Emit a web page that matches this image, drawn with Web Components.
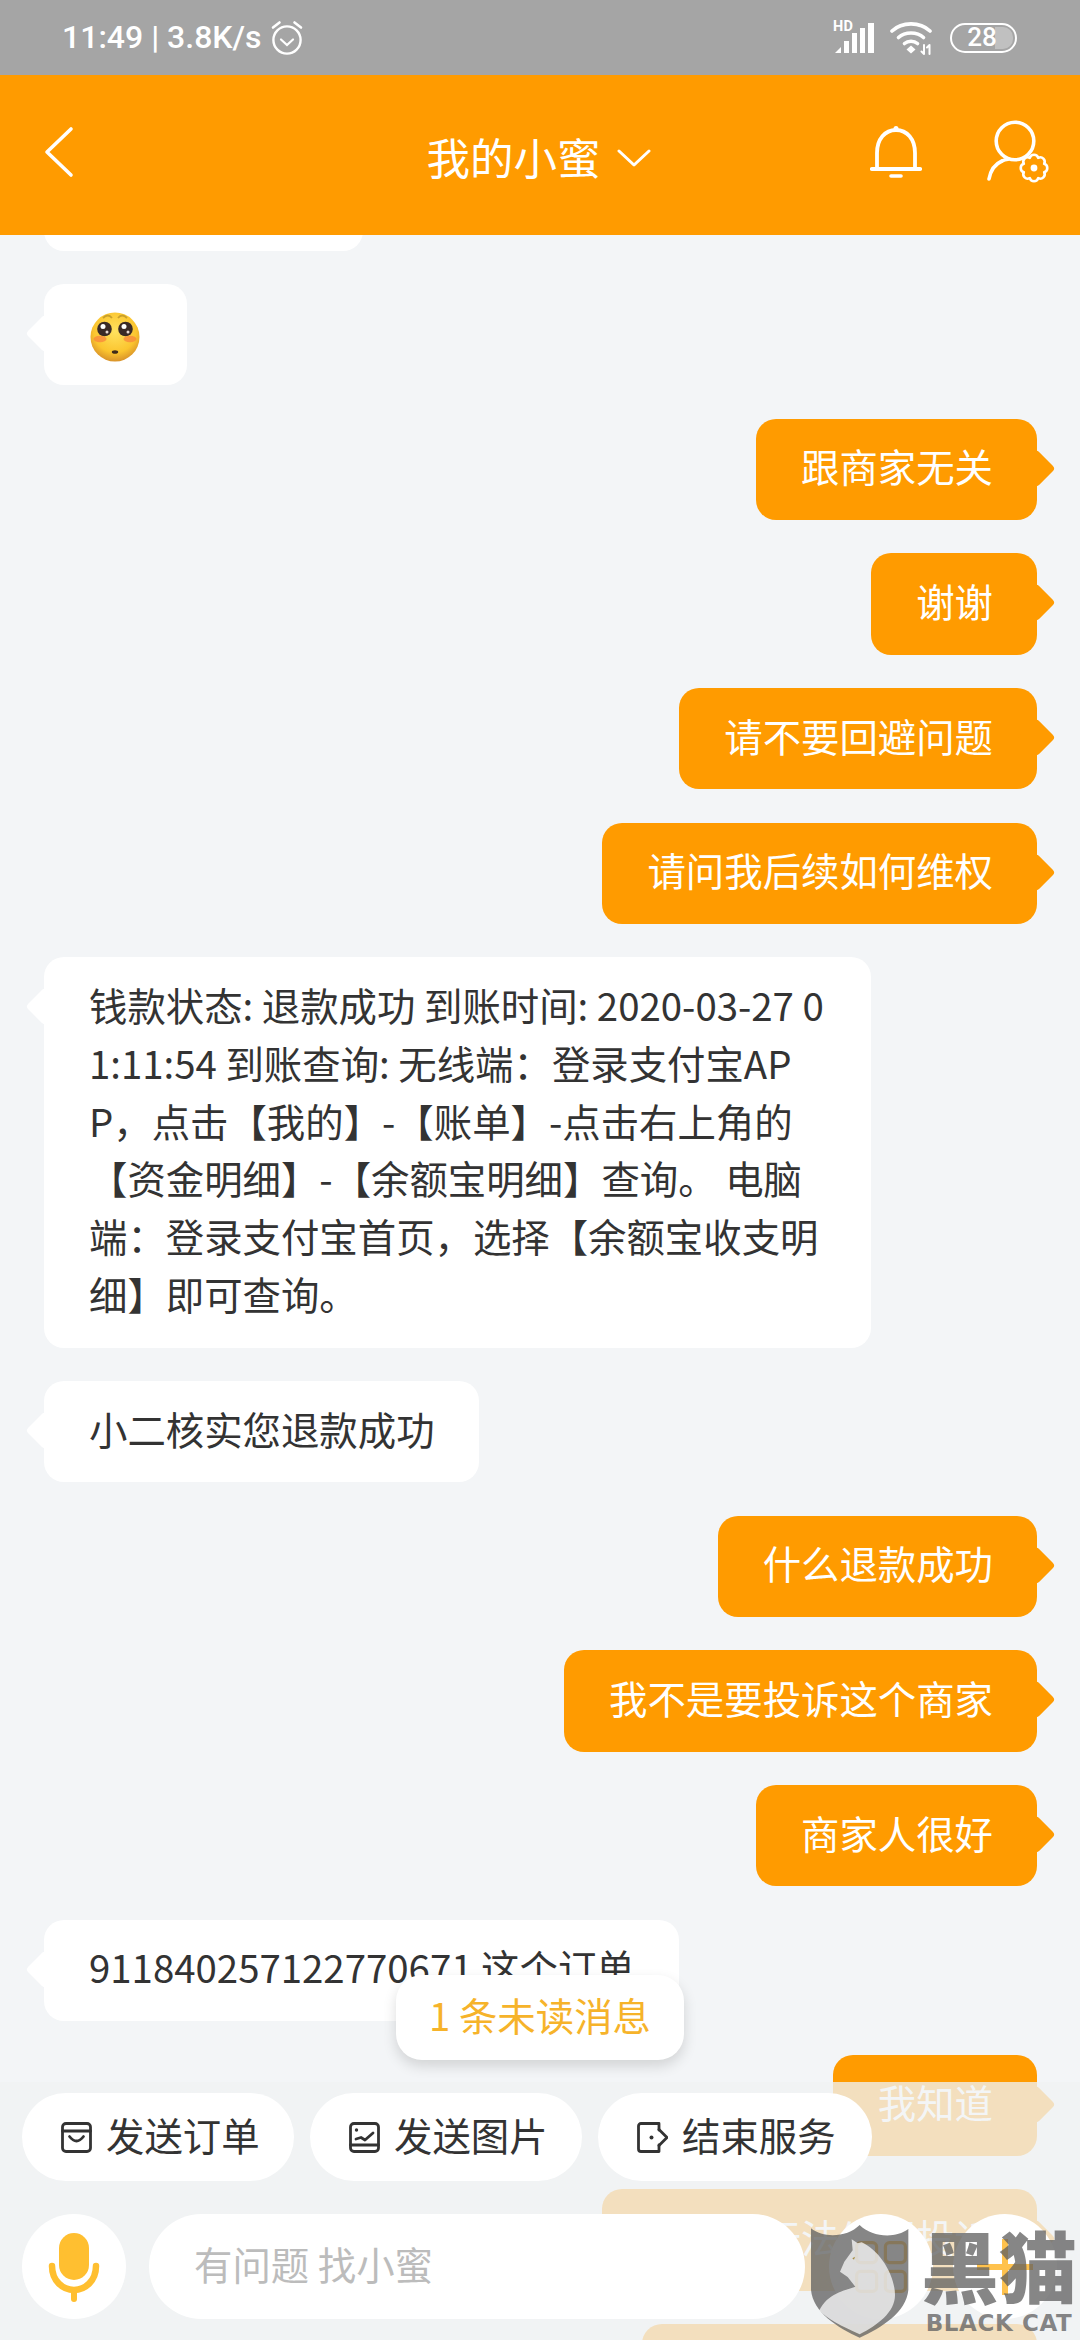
<!DOCTYPE html>
<html lang="zh">
<head>
<meta charset="utf-8">
<title>我的小蜜</title>
<style>
  html, body { margin: 0; padding: 0; background: #f3f5f7; }
  body { width: 1080px; height: 2340px; overflow: hidden; font-family: "Noto Sans CJK SC", "Noto Sans", sans-serif; }
</style>
</head>
<body>
<app-screen>
  <status-bar slot="status"></status-bar>
  <top-header slot="header"></top-header>

  <chat-bubble style="width:319px"></chat-bubble>
  <chat-bubble><blush-emoji></blush-emoji></chat-bubble>
  <chat-bubble side="me">跟商家无关</chat-bubble>
  <chat-bubble side="me">谢谢</chat-bubble>
  <chat-bubble side="me">请不要回避问题</chat-bubble>
  <chat-bubble side="me">请问我后续如何维权</chat-bubble>
  <chat-bubble>钱款状态: 退款成功 到账时间: 2020-03-27 01:11:54 到账查询: 无线端：登录支付宝APP，点击【我的】-【账单】-点击右上角的【资金明细】-【余额宝明细】查询。 电脑端：登录支付宝首页，选择【余额宝收支明细】即可查询。</chat-bubble>
  <chat-bubble>小二核实您退款成功</chat-bubble>
  <chat-bubble side="me">什么退款成功</chat-bubble>
  <chat-bubble side="me">我不是要投诉这个商家</chat-bubble>
  <chat-bubble side="me">商家人很好</chat-bubble>
  <chat-bubble>911840257122770671 这个订单</chat-bubble>
  <chat-bubble side="me">我知道</chat-bubble>
  <chat-bubble side="me">请问我无法发起投诉</chat-bubble>
  <chat-bubble side="me" style="width:395px"></chat-bubble>

  <unread-toast slot="overlay">1 条未读消息</unread-toast>
  <bottom-panel slot="overlay"></bottom-panel>
  <black-cat-mark slot="overlay"></black-cat-mark>
</app-screen>

<script>
const screenTemplate = document.createElement('template');
screenTemplate.innerHTML = `
<style>
  :host { display: flex; flex-direction: column; position: relative; width: 1080px; height: 2340px; overflow: hidden; background: #f3f5f7; }
  .top { position: relative; z-index: 2; flex: none; }
  .list { flex: 1; min-height: 0; overflow: hidden; display: flex; flex-direction: column; gap: 33.4px; padding: 0 43px 0 44px; margin-top: -85.7px; }
</style>
<div class="top"><slot name="status"></slot><slot name="header"></slot></div>
<div class="list"><slot></slot></div>
<slot name="overlay"></slot>
`;
class AppScreen extends HTMLElement {
  constructor() {
    super();
    this.attachShadow({ mode: 'open' }).appendChild(screenTemplate.content.cloneNode(true));
  }
}

const statusTemplate = document.createElement('template');
statusTemplate.innerHTML = `
<style>
  :host { display: flex; align-items: center; height: 75px; background: #a5a5a5; color: #fff; font-family: Roboto, "Noto Sans", sans-serif; box-sizing: border-box; padding: 0 63px 0 62px; }
  .time { font-size: 32px; font-weight: 500; line-height: 75px; white-space: nowrap; margin-right: 9px; }
  svg { display: block; flex: none; }
  .spacer { flex: 1; }
  .signal { position: relative; width: 42px; height: 31px; margin-right: 15px; }
  .hd { position: absolute; left: 0; top: -3px; font-size: 14.5px; font-weight: 700; line-height: 16px; letter-spacing: .3px; }
  .wifi { margin-right: 16px; }
  .battery { position: relative; box-sizing: border-box; width: 67px; height: 30px; border: 2.6px solid #fff; border-radius: 15px; display: flex; align-items: center; justify-content: center; font-size: 26px; font-weight: 500; line-height: 25px; }
  .battery span { position: relative; margin-right: 3px; }
  .level { position: absolute; right: 2px; top: 2px; bottom: 2px; width: 18px; background: rgba(255,255,255,.3); border-radius: 0 10px 10px 0; }
</style>
<div class="time">11:49 | 3.8K/s</div>
<svg width="34" height="36" viewBox="0 0 34 36" fill="none" stroke="#fff" stroke-linecap="round">
  <circle cx="17" cy="20" r="13.6" stroke-width="2.4"/>
  <path d="M11 19.5l6 5.5 6-5.5" stroke-width="2.2"/>
  <path d="M3 7.5L9.5 2.5M31 7.5L24.5 2.5" stroke-width="2.6"/>
</svg>
<div class="spacer"></div>
<div class="signal">
  <span class="hd">HD</span>
  <svg width="42" height="31" viewBox="0 0 42 31" fill="#fff" style="position:absolute;left:0;top:0">
    <path d="M2 31L8 25V31Z"/>
    <rect x="11" y="19" width="5" height="12"/>
    <rect x="19" y="11" width="5" height="20"/>
    <rect x="27" y="6" width="5" height="25"/>
    <rect x="35" y="1" width="6" height="30"/>
  </svg>
</div>
<svg class="wifi" width="44" height="34" viewBox="0 0 44 34" fill="none" stroke="#fff" stroke-width="3.6" stroke-linecap="round">
  <path d="M2 10C12 .5 30 .5 40 10"/>
  <path d="M8.5 16.5C15 10.5 27 10.5 33.5 16.5"/>
  <path d="M14.5 22.5C18 19.5 24 19.5 27.5 22.5"/>
  <path d="M21 24.5l4.5 4-4.5 4-4.5-4z" fill="#fff" stroke="none"/>
  <path d="M34 24v9M31.5 30.5l2.5 2.5M39.5 33v-9M37 26.500l2.500-2.500" stroke-width="2"/>
</svg>
<div class="battery"><div class="level"></div><span>28</span></div>
`;
class StatusBar extends HTMLElement {
  constructor() {
    super();
    this.attachShadow({ mode: 'open' }).appendChild(statusTemplate.content.cloneNode(true));
  }
}

const headerTemplate = document.createElement('template');
headerTemplate.innerHTML = `
<style>
  :host { display: grid; grid-template-columns: 1fr auto 1fr; align-items: center; height: 160px; background: #ff9b00; color: #fff; box-sizing: border-box; padding: 0 31px; }
  svg { display: block; }
  .back { margin: -6px 0 0 13px; }
  .title { display: flex; align-items: center; gap: 16px; font-size: 43.5px; line-height: 60px; margin: 4px 0 0 -3px; }
  .title svg { margin-top: 2px; }
  .actions { display: flex; justify-content: flex-end; align-items: center; gap: 65px; }
  .bell { margin-top: -8px; }
  .user { margin-top: -7px; }
</style>
<svg class="back" width="30" height="52" viewBox="0 0 30 52" fill="none" stroke="#fff" stroke-width="3.6" stroke-linecap="round" stroke-linejoin="round">
  <path d="M27 3L3 26l24 23"/>
</svg>
<div class="title">
  <span>我的小蜜</span>
  <svg width="34" height="18" viewBox="0 0 34 18" fill="none" stroke="#fff" stroke-width="3" stroke-linecap="round" stroke-linejoin="round"><path d="M2 2l15 14L32 2"/></svg>
</div>
<div class="actions">
  <svg class="bell" width="52" height="53" viewBox="0 0 52 53" fill="none" stroke="#fff" stroke-width="3.800" stroke-linecap="round">
    <path d="M7 43V28C7 14 15 5 26 5s19 9 19 23v15"/>
    <path d="M2 44h48" stroke-width="4.200"/>
    <path d="M21 51h10" stroke-width="3.600"/>
    <circle cx="26" cy="3.500" r="2.500" fill="#fff" stroke="none"/>
  </svg>
  <svg class="user" width="62" height="64" viewBox="0 0 62 64" fill="none" stroke="#fff" stroke-linecap="round">
    <circle cx="28" cy="21" r="18.800" stroke-width="3.600"/>
    <path d="M15 41C8 44 3.500 51 2 59" stroke-width="3.600"/>
    <path d="M15 41C17 40 19 39.500 21 39.300" stroke-width="3.600"/>
    <g transform="translate(47 48)">
      <path d="M10.160 4.210A4.400 4.400 0 0 1 4.210 10.160A4.400 4.400 0 0 1 -4.210 10.160A4.400 4.400 0 0 1 -10.160 4.210A4.400 4.400 0 0 1 -10.160 -4.210A4.400 4.400 0 0 1 -4.210 -10.160A4.400 4.400 0 0 1 4.210 -10.160A4.400 4.400 0 0 1 10.160 -4.210A4.400 4.400 0 0 1 10.160 4.210Z" stroke-width="2.600" stroke-linejoin="round"/>
      <circle r="3.400" fill="#fff" stroke="none"/>
    </g>
  </svg>
</div>
`;
class TopHeader extends HTMLElement {
  constructor() {
    super();
    this.attachShadow({ mode: 'open' }).appendChild(headerTemplate.content.cloneNode(true));
  }
}

const bubbleTemplate = document.createElement('template');
bubbleTemplate.innerHTML = `
<style>
  :host { display: block; flex: none; align-self: flex-start; box-sizing: border-box; max-width: 827px; font-size: 38.4px; line-height: 57.8px; color: #333; font-family: "Noto Sans CJK SC", sans-serif; }
  :host([side="me"]) { align-self: flex-end; color: #fff; }
  .box { position: relative; box-sizing: border-box; min-height: 101.3px; padding: 18.5px 44px 25px 45px; background: #fff; border-radius: 20px; word-break: break-all; }
  :host([side="me"]) .box { background: #ff9b00; }
  .tail { position: absolute; top: 36px; left: -13px; width: 27px; height: 27px; background: inherit; transform: rotate(45deg); border-radius: 4px; }
  :host([side="me"]) .tail { left: auto; right: -13px; }
</style>
<div class="box"><div class="tail"></div><slot></slot></div>
`;
class ChatBubble extends HTMLElement {
  constructor() {
    super();
    this.attachShadow({ mode: 'open' }).appendChild(bubbleTemplate.content.cloneNode(true));
  }
}

const emojiTemplate = document.createElement('template');
emojiTemplate.innerHTML = `
<style>
  :host { display: block; width: 54px; height: 57.8px; }
  svg { display: block; overflow: visible; }
</style>
<svg width="54" height="58" viewBox="0 0 54 58">
  <defs>
    <radialGradient id="face" cx=".5" cy=".38" r=".62">
      <stop offset="0" stop-color="#ffe25f"/><stop offset=".7" stop-color="#fbc52f"/><stop offset="1" stop-color="#d9932a"/>
    </radialGradient>
  </defs>
  <g transform="translate(0 3)">
    <circle cx="26" cy="31" r="24.500" fill="url(#face)"/>
    <path d="M14 12q5-5 9 0M38 12q-5-5-9 0" fill="none" stroke="#c9a02c" stroke-width="1.800"/>
    <circle cx="15.500" cy="23" r="7.300" fill="#3a2a26"/><circle cx="36.500" cy="23" r="7.300" fill="#3a2a26"/>
    <circle cx="14" cy="20.500" r="2.500" fill="#fff"/><circle cx="35" cy="20.500" r="2.500" fill="#fff"/>
    <circle cx="18" cy="26" r="1.500" fill="#e8d8d0"/><circle cx="39" cy="26" r="1.500" fill="#e8d8d0"/>
    <ellipse cx="11" cy="33" rx="6.500" ry="3.200" fill="#f98a3c" opacity=".8"/>
    <ellipse cx="41" cy="33" rx="6.500" ry="3.200" fill="#f98a3c" opacity=".8"/>
    <ellipse cx="26" cy="46" rx="3.200" ry="1.800" fill="#3f2b1a"/>
  </g>
</svg>
`;
class BlushEmoji extends HTMLElement {
  constructor() {
    super();
    this.attachShadow({ mode: 'open' }).appendChild(emojiTemplate.content.cloneNode(true));
  }
}

const toastTemplate = document.createElement('template');
toastTemplate.innerHTML = `
<style>
  :host { position: absolute; left: 396px; top: 1975px; z-index: 3; box-sizing: border-box; width: 288px; height: 85px; padding-bottom: 8px; display: flex; align-items: center; justify-content: center; background: #fff; border-radius: 26px; box-shadow: 0 6px 14px rgba(0,0,0,.14); color: #f6b32a; font-size: 38.4px; line-height: 58px; font-family: "Noto Sans CJK SC", sans-serif; white-space: pre; }
</style>
<slot></slot>
`;
class UnreadToast extends HTMLElement {
  constructor() {
    super();
    this.attachShadow({ mode: 'open' }).appendChild(toastTemplate.content.cloneNode(true));
  }
}

const quickTemplate = document.createElement('template');
quickTemplate.innerHTML = `
<style>
  :host { display: flex; align-items: center; gap: 14px; box-sizing: border-box; width: 272px; height: 88px; padding-left: 39px; background: #fff; border-radius: 44px; color: #333; font-size: 38.4px; line-height: 82px; white-space: nowrap; font-family: "Noto Sans CJK SC", sans-serif; }
  .label { height: 88px; }
  ::slotted(svg) { display: block; flex: none; }
</style>
<slot name="icon"></slot><div class="label"><slot></slot></div>
`;
class QuickButton extends HTMLElement {
  constructor() {
    super();
    this.attachShadow({ mode: 'open' }).appendChild(quickTemplate.content.cloneNode(true));
  }
}

const panelTemplate = document.createElement('template');
panelTemplate.innerHTML = `
<style>
  :host { position: absolute; left: 0; right: 0; top: 2082px; bottom: 0; z-index: 3; display: flex; flex-direction: column; gap: 33px; box-sizing: border-box; padding: 11px 23px 0 22px; background: rgba(240,242,244,.78); font-family: "Noto Sans CJK SC", sans-serif; }
  .quick { display: flex; gap: 16px; }
  .input-row { display: flex; align-items: center; }
  .round { flex: none; width: 104px; height: 105px; border-radius: 50%; background: #fff; display: flex; align-items: center; justify-content: center; }
  .field { flex: none; box-sizing: border-box; width: 656px; height: 105px; margin: 0 24px 0 23px; padding-left: 45px; border-radius: 53px; background: #fff; color: #bcbcbc; font-size: 38.4px; line-height: 99px; }
  .plus { margin-left: 20px; }
  svg { display: block; }
</style>
<div class="quick">
  <quick-button>
    <svg slot="icon" width="31" height="31" viewBox="0 0 31 31" fill="none" stroke="#333" stroke-width="2.800" stroke-linecap="round">
      <rect x="1.500" y="1.500" width="28" height="28" rx="3.500"/>
      <path d="M1.500 9h28"/>
      <path d="M8.500 14.500q7 9 14 0"/>
    </svg>
    发送订单
  </quick-button>
  <quick-button>
    <svg slot="icon" width="31" height="31" viewBox="0 0 31 31" fill="none" stroke="#333" stroke-width="2.800" stroke-linecap="round" stroke-linejoin="round">
      <rect x="1.500" y="1.500" width="28" height="28" rx="3.500"/>
      <path d="M1.500 23h28"/>
      <path d="M7 17l5-1.500 4 2.500 8-7"/>
      <circle cx="7.500" cy="8" r="1.700" fill="#333" stroke="none"/>
    </svg>
    发送图片
  </quick-button>
  <quick-button style="width:274px">
    <svg slot="icon" width="31" height="31" viewBox="0 0 31 31" fill="none" stroke="#333" stroke-width="2.800" stroke-linecap="round" stroke-linejoin="round">
      <path d="M22 8V1.500H4A2.500 2.500 0 0 0 1.500 4v23A2.500 2.500 0 0 0 4 29.500h18V23"/>
      <path d="M22 7.500l8 8-8 8"/>
      <circle cx="14.500" cy="15.500" r="2" fill="#333" stroke="none"/>
    </svg>
    结束服务
  </quick-button>
</div>
<div class="input-row">
  <div class="round">
    <svg width="52" height="72" viewBox="0 0 52 72" fill="none" stroke="#ffbf30" stroke-linecap="round">
      <rect x="11" y="2" width="30" height="47" rx="15" fill="#ffbf30" stroke="none"/>
      <path d="M4 35C4 50 15 59 26 59s22-9 22-24" stroke-width="6.500"/>
      <path d="M26 59v9" stroke-width="6"/>
    </svg>
  </div>
  <div class="field">有问题 找小蜜</div>
  <div class="round">
    <svg width="52" height="52" viewBox="0 0 52 52" fill="none" stroke="#ffc24d" stroke-width="3.200">
      <rect x="1.600" y="1.600" width="20" height="20" rx="4"/><rect x="30.400" y="1.600" width="20" height="20" rx="4"/>
      <rect x="1.600" y="30.400" width="20" height="20" rx="4"/><rect x="30.400" y="30.400" width="20" height="20" rx="4"/>
    </svg>
  </div>
  <div class="round plus">
    <svg width="56" height="56" viewBox="0 0 56 56" fill="none" stroke="#ffc24d" stroke-width="6"><path d="M28 0v56M0 28h56"/></svg>
  </div>
</div>
`;
class BottomPanel extends HTMLElement {
  constructor() {
    super();
    this.attachShadow({ mode: 'open' }).appendChild(panelTemplate.content.cloneNode(true));
  }
}

const markTemplate = document.createElement('template');
markTemplate.innerHTML = `
<style>
  :host { position: absolute; left: 811px; top: 2225px; z-index: 4; display: flex; gap: 12px; pointer-events: none; white-space: nowrap; }
  svg { display: block; flex: none; }
  .words { display: flex; flex-direction: column; align-items: center; color: rgba(96,96,96,.76); }
  .cn { font-family: "Noto Sans CJK SC", sans-serif; font-weight: 900; font-size: 78px; line-height: 78px; height: 86px; }
  .en { font-family: "DejaVu Sans", sans-serif; font-weight: 700; font-size: 23px; line-height: 24px; letter-spacing: .6px; }
</style>
<svg width="98" height="113" viewBox="0 0 294 339">
  <path d="M0 10C40 42 110 36 146 0C182 36 252 42 292 12V195C286 262 212 308 146 338C80 308 6 262 0 195Z" fill="rgba(96,96,96,.76)"/>
  <path d="M122 43L140 55L152 52C205 75 252 150 252 210C252 262 200 300 146 328C92 304 48 282 25 256C50 205 100 197 133 185L110 156L87 140L100 110L125 76Z" fill="rgba(255,255,255,.72)"/>
  <path d="M124 100l8-5-3 9z" fill="#a58a3f"/>
</svg>
<div class="words">
  <div class="cn">黑猫</div>
  <div class="en">BLACK CAT</div>
</div>
`;
class BlackCatMark extends HTMLElement {
  constructor() {
    super();
    this.attachShadow({ mode: 'open' }).appendChild(markTemplate.content.cloneNode(true));
  }
}

window.customElements.define('app-screen', AppScreen);
window.customElements.define('status-bar', StatusBar);
window.customElements.define('top-header', TopHeader);
window.customElements.define('chat-bubble', ChatBubble);
window.customElements.define('blush-emoji', BlushEmoji);
window.customElements.define('unread-toast', UnreadToast);
window.customElements.define('quick-button', QuickButton);
window.customElements.define('bottom-panel', BottomPanel);
window.customElements.define('black-cat-mark', BlackCatMark);
</script>
</body>
</html>
